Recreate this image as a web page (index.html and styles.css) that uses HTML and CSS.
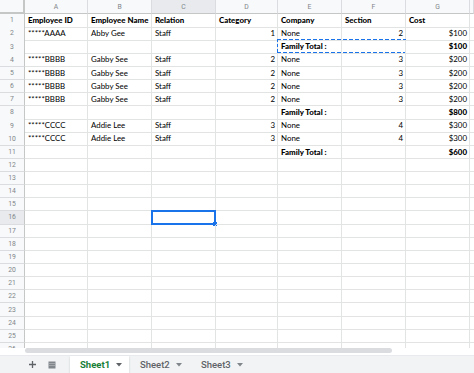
FILE: index.html
```html
<!DOCTYPE html>
<html lang="en">

<head>
    <meta charset="UTF-8">
    <meta name="viewport" content="width=device-width, initial-scale=1.0">
    <title>Family Totals</title>

    <link rel="stylesheet" href="styles.css">
</head>

<body>

    <div class="app">
        <div class="sheet" data-sheet>
            <div class="row row--head">
                <div class="corner"></div>
                <div class="col-head">A</div>
                <div class="col-head">B</div>
                <div class="col-head col-head--active">C</div>
                <div class="col-head">D</div>
                <div class="col-head">E</div>
                <div class="col-head">F</div>
                <div class="col-head">G</div>
                <div class="col-head"></div>
            </div>
        </div>

        <div class="scrollbar">
            <div class="scrollbar__thumb"></div>
        </div>

        <div class="tabs">
            <button class="tabs__icon" aria-label="Add sheet">
                <svg width="9" height="9" viewBox="0 0 9 9">
                    <path d="M4.5 1v7M1 4.5h7" stroke="#5f6368" stroke-width="1.3" fill="none" />
                </svg>
            </button>
            <button class="tabs__icon" aria-label="All sheets">
                <svg width="8" height="8" viewBox="0 0 8 8">
                    <rect x="0.5" y="0.5" width="7" height="7" fill="#80868b" />
                    <path d="M0.5 2.5h7M0.5 4.5h7" stroke="#bdc1c6" stroke-width="0.6" />
                </svg>
            </button>
            <div class="tab tab--active">
                Sheet1
                <svg class="tab__caret" width="6" height="4" viewBox="0 0 6 4"><path d="M0 0h6L3 3.5z" fill="#5f6368" /></svg>
            </div>
            <div class="tab">
                Sheet2
                <svg class="tab__caret" width="6" height="4" viewBox="0 0 6 4"><path d="M0 0h6L3 3.5z" fill="#80868b" /></svg>
            </div>
            <div class="tab">
                Sheet3
                <svg class="tab__caret" width="6" height="4" viewBox="0 0 6 4"><path d="M0 0h6L3 3.5z" fill="#80868b" /></svg>
            </div>
        </div>
    </div>

    <script>
        const sheet = document.querySelector("[data-sheet]");

        // each row: [A, B, C, D, E, F, G]
        const rows = [
            ["Employee ID", "Employee Name", "Relation", "Category", "Company", "Section", "Cost"],
            ["*****AAAA", "Abby Gee", "Staff", "1", "None", "2", "$100"],
            ["", "", "", "", "Family Total :", "", "$100"],
            ["*****BBBB", "Gabby See", "Staff", "2", "None", "3", "$200"],
            ["*****BBBB", "Gabby See", "Staff", "2", "None", "3", "$200"],
            ["*****BBBB", "Gabby See", "Staff", "2", "None", "3", "$200"],
            ["*****BBBB", "Gabby See", "Staff", "2", "None", "3", "$200"],
            ["", "", "", "", "Family Total :", "", "$800"],
            ["*****CCCC", "Addie Lee", "Staff", "3", "None", "4", "$300"],
            ["*****CCCC", "Addie Lee", "Staff", "3", "None", "4", "$300"],
            ["", "", "", "", "Family Total :", "", "$600"]
        ];

        const rightCols = [3, 5, 6];

        for (let r = 0; r < 26; r++) {
            const data = rows[r] || [];
            const row = document.createElement("div");
            row.className = "row";

            const num = document.createElement("div");
            num.className = "row-head" + (r === 15 ? " row-head--active" : "");
            num.textContent = r + 1;
            row.appendChild(num);

            for (let c = 0; c < 8; c++) {
                const cell = document.createElement("div");
                const value = data[c] || "";
                cell.className = "cell";

                if (rightCols.includes(c) && r > 0) cell.classList.add("cell--num");
                if (r === 0 || value === "Family Total :" || (c === 6 && data[4] === "Family Total :")) {
                    cell.classList.add("cell--bold");
                }

                cell.textContent = value;

                // copied range E3:F3
                if (r === 2 && c === 4) {
                    const copy = document.createElement("div");
                    copy.className = "copy-range";
                    cell.appendChild(copy);
                }

                // active cell C16
                if (r === 15 && c === 2) {
                    const sel = document.createElement("div");
                    sel.className = "selection";
                    cell.appendChild(sel);
                }

                row.appendChild(cell);
            }

            sheet.appendChild(row);
        }
    </script>

</body>

</html>
```

FILE: styles.css
```css
* {
    box-sizing: border-box;
}

body {
    margin: 0;
    background: #fff;
}

.app {
    width: 474px;
    height: 373px;
    overflow: hidden;
    display: flex;
    flex-direction: column;
    font-family: "Lato", "Open Sans", sans-serif;
}

.sheet {
    --cols: 25px 63px 64px 64px 62px 64px 64px 64px 1fr;
    height: 348px;
    overflow: hidden;
    flex: none;
}

.row {
    display: grid;
    grid-template-columns: var(--cols);
    height: 13.16px;
}

.row--head {
    height: 14px;
}

.corner,
.col-head,
.row-head {
    background: #f8f9fa;
    color: #80868b;
    font-family: Roboto, sans-serif;
    font-size: 6.8px;
    display: flex;
    align-items: center;
    justify-content: center;
}

.corner {
    border-right: 2px solid #c4c7c5;
    border-bottom: 2px solid #c4c7c5;
}

.col-head {
    border-right: 1px solid #dadce0;
    border-bottom: 1px solid #c4c7c5;
}

.col-head--active {
    background: #e8eaed;
}

.row-head {
    border-right: 1px solid #c4c7c5;
    border-bottom: 1px solid #dadce0;
}

.row-head--active {
    background: #e8eaed;
}

.cell {
    position: relative;
    border-right: 1px solid #e2e3e3;
    border-bottom: 1px solid #e2e3e3;
    padding: 0 2px 0 3px;
    font-size: 7.9px;
    line-height: 12.5px;
    color: #000;
    white-space: nowrap;
}

.cell--num {
    text-align: right;
}

.cell--bold {
    font-weight: 900;
}

.copy-range {
    position: absolute;
    left: -1px;
    top: -1px;
    width: 129px;
    height: 14px;
    background:
        repeating-linear-gradient(90deg, #1a73e8 0 4px, transparent 4px 6px) top / 100% 1px no-repeat,
        repeating-linear-gradient(90deg, #1a73e8 0 4px, transparent 4px 6px) bottom / 100% 1px no-repeat,
        repeating-linear-gradient(180deg, #1a73e8 0 3px, transparent 3px 5px) left / 1px 100% no-repeat,
        repeating-linear-gradient(180deg, #1a73e8 0 3px, transparent 3px 5px) right / 1px 100% no-repeat;
}

.selection {
    position: absolute;
    left: -1px;
    top: -1px;
    right: -1px;
    bottom: -1px;
    border: 2px solid #1a73e8;
}

.selection::after {
    content: "";
    position: absolute;
    right: -3px;
    bottom: -3px;
    width: 4px;
    height: 4px;
    background: #1a73e8;
}

.scrollbar {
    height: 7px;
    padding: 0 0 2px 25px;
    background: #fff;
    flex: none;
}

.scrollbar__thumb {
    width: 367px;
    height: 5px;
    border-radius: 3px;
    background: #dadce0;
}

.tabs {
    flex: 1;
    display: flex;
    align-items: stretch;
    background: #f1f3f4;
    border-top: 1px solid #e8eaed;
    padding-left: 23px;
    font-family: Roboto, sans-serif;
    font-size: 9.5px;
    font-weight: 500;
    color: #5f6368;
}

.tabs__icon {
    width: 19px;
    display: flex;
    align-items: center;
    justify-content: center;
    border: 0;
    padding: 0;
    background: none;
}

.tab {
    display: flex;
    align-items: center;
    gap: 6px;
    padding: 0 9px 0 11px;
    width: 61px;
}

.tab--active {
    margin-left: 9px;
    width: 59px;
    padding-left: 10px;
    background: #fff;
    color: #188038;
    font-weight: 700;
    box-shadow: 0 1px 2px rgba(60, 64, 67, 0.2);
}

.tab__caret {
    flex: none;
}
```
